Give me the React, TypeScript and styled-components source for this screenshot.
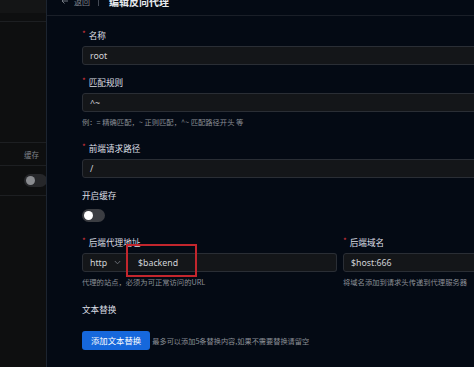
import React from "react";
import styled, { createGlobalStyle } from "styled-components";

const Global = createGlobalStyle`
  html, body { margin: 0; padding: 0; background: #040a14; overflow: hidden; }
  body { font-family: "Noto Sans", "Noto Sans CJK SC", sans-serif; }
`;

const Page = styled.div`
  display: flex;
  width: 474px;
  height: 367px;
  overflow: hidden;
  background: #040a14;
`;

const Sidebar = styled.aside`
  width: 46px;
  flex: none;
  background: #0e0f10;
  border-right: 1px solid #1c2430;
  display: flex;
  flex-direction: column;
  overflow: hidden;
`;

const SideRow = styled.div<{ $h: number; $line?: boolean; $bg?: string }>`
  height: ${(p) => p.$h}px;
  flex: none;
  display: flex;
  align-items: center;
  justify-content: flex-end;
  padding-right: 7px;
  background: ${(p) => p.$bg || "transparent"};
  border-bottom: ${(p) => (p.$line ? "1px solid #1d1f22" : "none")};
  font-family: "Noto Sans CJK SC", sans-serif;
  font-size: 7.5px;
  color: #7d8088;
`;

const SideToggleRow = styled(SideRow)`
  justify-content: flex-start;
  padding-left: 24px;
  padding-right: 0;
`;

const Main = styled.main`
  flex: 1;
  display: flex;
  flex-direction: column;
  min-width: 0;
`;

const Header = styled.header`
  height: 28px;
  margin-top: -13px;
  display: flex;
  align-items: center;
  gap: 8px;
  padding-left: 14px;
  border-bottom: 1px solid #1a1f28;
  flex: none;
`;

const Back = styled.span`
  font-family: "Noto Sans CJK SC", sans-serif;
  font-size: 8px;
  color: #7c818a;
  display: flex;
  align-items: center;
  gap: 5px;
`;

const Divider = styled.span`
  width: 1px;
  height: 10px;
  background: #444a55;
`;

const Title = styled.span`
  font-family: "Noto Sans CJK SC", sans-serif;
  font-size: 10px;
  font-weight: 700;
  color: #e8eaee;
  margin-left: 2px;
`;

const Form = styled.div`
  padding: 11px 0 0 35px;
  width: 470px;
  display: flex;
  flex-direction: column;
`;

const Item = styled.div<{ $mb: number }>`
  display: flex;
  flex-direction: column;
  align-items: stretch;
  margin-bottom: ${(p) => p.$mb}px;
`;

const Label = styled.div`
  height: 16px;
  line-height: 16px;
  margin-bottom: 3px;
  font-family: "Noto Sans CJK SC", sans-serif;
  font-size: 8.6px;
  color: #dcdfe4;
  display: flex;
  align-items: center;
`;

const Req = styled.span`
  color: #d9363e;
  font-size: 8px;
  margin-right: 3px;
  position: relative;
  top: -1px;
`;

const Input = styled.div`
  height: 19px;
  flex: none;
  box-sizing: border-box;
  background: #141619;
  border: 1px solid #2a2e35;
  border-radius: 3px;
  display: flex;
  align-items: center;
  padding: 0 7px;
  font-family: "Noto Sans", sans-serif;
  font-size: 8.8px;
  color: #d2d4d8;
`;

const Help = styled.div`
  margin-top: 4px;
  line-height: 12px;
  font-family: "Noto Sans CJK SC", sans-serif;
  font-size: 7.3px;
  color: #8b8f96;
  white-space: nowrap;
`;

const Columns = styled.div`
  display: flex;
  gap: 6px;
`;

const Col = styled.div<{ $w: number }>`
  width: ${(p) => p.$w}px;
  flex: none;
  display: flex;
  flex-direction: column;
`;

const Compact = styled.div`
  display: flex;
  position: relative;
`;

const Select = styled.div`
  width: 45px;
  height: 19px;
  box-sizing: border-box;
  flex: none;
  background: #141619;
  border: 1px solid #2a2e35;
  border-radius: 3px 0 0 3px;
  display: flex;
  align-items: center;
  justify-content: space-between;
  padding: 0 5px 0 7px;
  font-family: "Noto Sans", sans-serif;
  font-size: 8.8px;
  color: #d2d4d8;
`;

const CompactInput = styled(Input)`
  flex: 1;
  border-left: none;
  border-radius: 0 3px 3px 0;
  padding-left: 11px;
`;

const Highlight = styled.div`
  position: absolute;
  left: 44px;
  top: -9px;
  width: 71px;
  height: 33px;
  box-sizing: border-box;
  border: 2px solid #c3262d;
  pointer-events: none;
`;

const Switch = styled.div<{ $dim?: boolean }>`
  width: 23px;
  height: 13px;
  border-radius: 7px;
  background: ${(p) => (p.$dim ? "#26272a" : "#3b3d42")};
  position: relative;
  flex: none;
  &::after {
    content: "";
    position: absolute;
    left: 2px;
    top: 2px;
    width: 9px;
    height: 9px;
    border-radius: 50%;
    background: ${(p) => (p.$dim ? "#8a8c90" : "#ffffff")};
  }
`;

const SwitchWrap = styled.div`
  margin-top: 3px;
  display: flex;
`;

const ButtonRow = styled.div`
  display: flex;
  align-items: center;
  gap: 2px;
`;

const Button = styled.button`
  height: 19px;
  padding: 0 9px;
  border: none;
  border-radius: 3px;
  background: #1668dc;
  color: #ffffff;
  font-family: "Noto Sans CJK SC", sans-serif;
  font-size: 8.4px;
  line-height: 19px;
`;

const Note = styled.span`
  font-family: "Noto Sans CJK SC", sans-serif;
  font-size: 7.2px;
  color: #8b8f96;
  white-space: nowrap;
`;

const SectionLabel = styled(Label)`
  margin-top: 13px;
  margin-bottom: 14px;
`;

const Chevron = () => (
  <svg width="7" height="5" viewBox="0 0 7 5" fill="none">
    <path d="M0.8 1 L3.5 3.8 L6.2 1" stroke="#6f747c" strokeWidth="0.9" />
  </svg>
);

const ArrowLeft = () => (
  <svg width="8" height="8" viewBox="0 0 8 8" fill="none">
    <path d="M7 4 H1 M3.5 1.5 L1 4 L3.5 6.5" stroke="#7c818a" strokeWidth="0.9" />
  </svg>
);

export default function App() {
  return (
    <>
      <Global />
      <Page>
        <Sidebar>
          <SideRow $h={13} $bg="#141516" />
          <SideRow $h={8} $line />
          <SideRow $h={120} $line />
          <SideRow $h={22} $line>缓存</SideRow>
          <SideToggleRow $h={29} $line>
            <Switch $dim />
          </SideToggleRow>
        </Sidebar>
        <Main>
          <Header>
            <Back>
              <ArrowLeft />
              返回
            </Back>
            <Divider />
            <Title>编辑反向代理</Title>
          </Header>
          <Form>
            <Item $mb={9}>
              <Label>
                <Req>*</Req>名称
              </Label>
              <Input>root</Input>
            </Item>
            <Item $mb={12}>
              <Label>
                <Req>*</Req>匹配规则
              </Label>
              <Input>^~</Input>
              <Help>例：= 精确匹配，~ 正则匹配，^~ 匹配路径开头 等</Help>
            </Item>
            <Item $mb={9}>
              <Label>
                <Req>*</Req>前端请求路径
              </Label>
              <Input>/</Input>
            </Item>
            <Item $mb={12}>
              <Label>开启缓存</Label>
              <SwitchWrap>
                <Switch />
              </SwitchWrap>
            </Item>
            <Columns>
              <Col $w={255}>
                <Label>
                  <Req>*</Req>后端代理地址
                </Label>
                <Compact>
                  <Select>
                    http
                    <Chevron />
                  </Select>
                  <CompactInput>$backend</CompactInput>
                  <Highlight />
                </Compact>
                <Help>代理的站点，必须为可正常访问的URL</Help>
              </Col>
              <Col $w={180}>
                <Label>
                  <Req>*</Req>后端域名
                </Label>
                <Input>$host:666</Input>
                <Help>将域名添加到请求头传递到代理服务器</Help>
              </Col>
            </Columns>
            <Item $mb={0}>
              <SectionLabel>文本替换</SectionLabel>
              <ButtonRow>
                <Button>添加文本替换</Button>
                <Note>最多可以添加5条替换内容,如果不需要替换请留空</Note>
              </ButtonRow>
            </Item>
          </Form>
        </Main>
      </Page>
    </>
  );
}
